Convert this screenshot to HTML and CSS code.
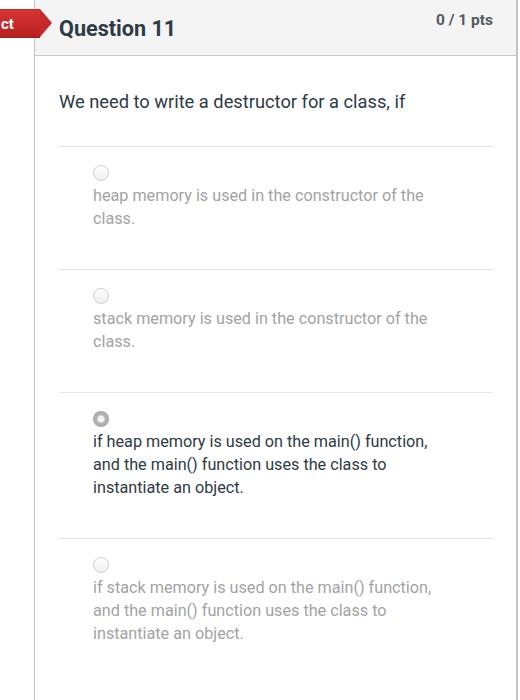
FILE: index.html
```html
<!DOCTYPE html>
<html>
<head>
<meta charset="utf-8">
<link rel="stylesheet" href="styles.css">
</head>
<body>
<div class="page">
  <div class="tag"><span class="tag-text">ct</span></div>
  <div class="card">
    <div class="header">
      <div class="title">Question 11</div>
      <div class="pts">0 / 1 pts</div>
    </div>
    <div class="content">
      <div class="question">We need to write a destructor for a class, if</div>
      <div class="answers">
        <div class="answer">
          <span class="radio"></span>
          <div class="atext">heap memory is used in the constructor of the class.</div>
        </div>
        <div class="answer">
          <span class="radio"></span>
          <div class="atext">stack memory is used in the constructor of the class.</div>
        </div>
        <div class="answer selected">
          <span class="radio checked"></span>
          <div class="atext">if heap memory is used on the main() function, and the main() function uses the class to instantiate an object.</div>
        </div>
        <div class="answer">
          <span class="radio"></span>
          <div class="atext">if stack memory is used on the main() function, and the main() function uses the class to instantiate an object.</div>
        </div>
      </div>
    </div>
  </div>
</div>
</body>
</html>
```

FILE: styles.css
```css
html, body {
  margin: 0;
  padding: 0;
  background: #ffffff;
  overflow: hidden;
}
body {
  font-family: Roboto, "Liberation Sans", Arial, sans-serif;
  color: #2d3b45;
}
.page {
  position: relative;
  padding-left: 34px;
  padding-right: 2px;
  height: 700px;
}
.card {
  border-left: 1px solid #c4c4c4;
  border-right: 2px solid #c4c4c4;
  height: 700px;
  box-sizing: border-box;
}
.header {
  height: 55px;
  background: #f4f4f4;
  border-bottom: 1px solid #c9c9c9;
  display: flex;
  justify-content: space-between;
  align-items: flex-start;
  padding: 0 23px 0 24px;
}
.title {
  margin-top: 17px;
  font-size: 21.6px;
  line-height: 24px;
  font-weight: 700;
  color: #2d3b45;
}
.pts {
  margin-top: 11px;
  font-size: 15.5px;
  line-height: 18px;
  font-weight: 700;
  color: #555a5e;
}
.content {
  padding: 34px 23px 0 24px;
}
.question {
  font-size: 18.3px;
  line-height: 24px;
  color: #2d3b45;
  margin-bottom: 32px;
}
.answer {
  border-top: 1px solid #e6e6e6;
  padding: 18px 0 39px 34px;
  display: flex;
  flex-direction: column;
  align-items: flex-start;
}
.radio {
  width: 14px;
  height: 14px;
  border-radius: 50%;
  border: 1px solid #cfcfcf;
  background: linear-gradient(#ffffff, #eeeeee);
  margin-bottom: 3px;
}
.radio.checked {
  width: 16px;
  height: 16px;
  border: none;
  background: radial-gradient(circle, #f4f4f4 0, #f4f4f4 3px, #b9b9b9 4px, #a6a6a6 8px);
}
.atext {
  width: 362px;
  font-size: 16.2px;
  line-height: 23px;
  color: #a3a3a3;
}
.selected .atext {
  color: #2d3b45;
}
.tag {
  position: absolute;
  left: 0;
  top: 9px;
  height: 29px;
  width: 40px;
  background: linear-gradient(#d83434, #b81f1f);
  border-top: 1px solid #c22a2a;
  border-bottom: 1px solid #9e1a1a;
  box-sizing: border-box;
  display: flex;
  align-items: center;
  padding-left: 1px;
  z-index: 2;
}
.tag::after {
  content: "";
  position: absolute;
  right: -12px;
  top: -1px;
  border-top: 14.5px solid transparent;
  border-bottom: 14.5px solid transparent;
  border-left: 12px solid #c72828;
}
.tag-text {
  color: #ffffff;
  font-weight: 700;
  font-size: 15px;
  white-space: nowrap;
}
```
